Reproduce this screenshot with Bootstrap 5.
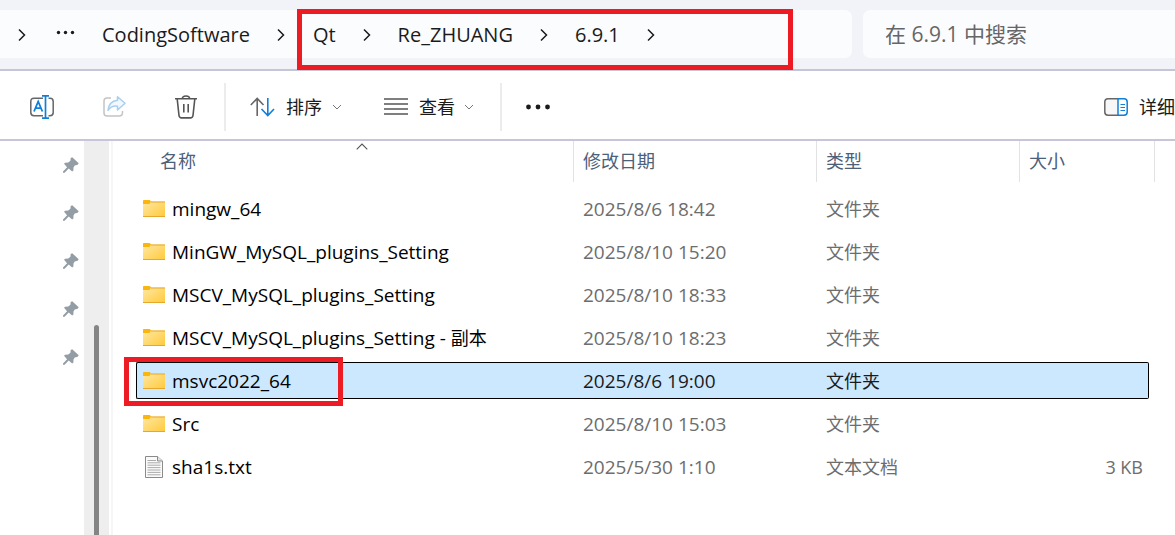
<!DOCTYPE html>
<html lang="zh-CN">
<head>
<meta charset="utf-8">
<meta name="viewport" content="width=device-width, initial-scale=1">
<title>6.9.1</title>
<link href="https://cdn.jsdelivr.net/npm/bootstrap@5.3.0/dist/css/bootstrap.min.css" rel="stylesheet">
<style>
body { font-family: "Open Sans", "Noto Sans CJK SC", sans-serif; font-size: 18px; line-height: 24px; color: #1b1b1b; background: #fff; }
a, button { color: inherit; text-decoration: none; }
svg { display: block; flex: none; }
.topbar { background: #f1f3f9; height: 71px; border-bottom: 2px solid #c5c5da; padding-top: 10px; gap: 11px; font-size: 20px; }
.address { background: #fbfcfe; height: 48px; border-radius: 0 7px 7px 0; padding: 2px 0 0 18px; min-width: 0; }
.trail { gap: 27px; }
.marked { position: relative; height: 36px; margin-left: 1px; gap: 27px; }
.marked::after { content: ""; position: absolute; left: -16px; top: -8px; width: 496px; height: 61px; border: 5px solid #ed1c24; pointer-events: none; }
.search { width: 312px; height: 48px; border: 0; border-radius: 7px 0 0 7px; background: #fbfcfe; padding: 0 22px; font-size: 21px; }
.search::placeholder { color: #666; opacity: 1; }
.toolbar { height: 70px; border-bottom: 2px solid #c8c5d9; padding: 3px 0 0 30px; }
.tool { border: 0; background: none; padding: 0; white-space: nowrap; }
.share, .trash { margin-left: 48px; }
.bar { width: 2px; height: 48px; background: #ececec; margin: 0 24px 0 26px; }
.order { margin-right: 42px; gap: 10px; }
.view { gap: 11px; }
.view svg:last-child { margin-left: -2px; }
.pins { width: 84px; padding-right: 5px; }
.pins button { border: 0; background: none; padding: 0; height: 48px; }
.track { width: 25px; background: #eee; padding: 184px 10px 0; }
.thumb { width: 5px; background: #858585; border-radius: 3px 3px 0 0; }
.split { width: 2px; background: #f6f6f6; margin-left: 2px; }
.pane { padding: 0 20px 0 23px; min-width: 0; }
.files { border-collapse: separate; border-spacing: 0 6px; table-layout: fixed; width: 100%; margin-top: -6px; }
.c-date { width: 243px; }
.c-type { width: 203px; }
.c-size { width: 129px; }
.c-end { width: 6px; }
.files th { height: 43px; padding: 0; font-weight: 400; color: #4c607a; vertical-align: top; }
.files th:first-child { padding-left: 15px; }
.head { height: 41px; padding: 0 0 2px 9px; border-right: 1px solid #e2e2e2; position: relative; display: flex; align-items: center; }
.files td { height: 37px; padding: 0 9px; color: #6d6d6d; white-space: nowrap; vertical-align: middle; }
.files td:first-child { padding-left: 7px; color: #000; }
.files td:nth-child(-n+2) { font-size: 19px; }
.entry { gap: 7px; }
.han { font-size: 18px; }
.files td:nth-child(4) { padding-right: 6px; text-align: right; }
.files td:last-child { padding: 0; }
.sort { position: absolute; left: 50%; top: 2px; transform: translateX(-50%); }
.picked td:not(:last-child) { background: #cce8ff; border: solid #000; border-width: 1px 0; color: #1b1b1b; }
.files .picked td:first-child { border-left-width: 1px; border-radius: 2px 0 0 2px; position: relative; padding-left: 6px; color: #000; }
.picked td:nth-child(4) { border-right-width: 1px !important; border-radius: 0 2px 2px 0; }
.picked td:first-child::after { content: ""; position: absolute; left: -13px; top: -6px; width: 219px; height: 49px; border: 5px solid #ed1c24; }
</style>
</head>
<body class="d-flex flex-column min-vh-100 overflow-hidden">
<svg width="0" height="0" class="position-absolute" aria-hidden="true">
  <defs>
    <linearGradient id="fg" x1="0" y1="0" x2="1" y2="1"><stop offset="0" stop-color="#ffe8a4"/><stop offset="1" stop-color="#ffca3a"/></linearGradient>
    <symbol id="chev" viewBox="0 0 8 14"><path d="M1 1.5 6.5 7 1 12.5" fill="none" stroke="#1b1b1b" stroke-width="1.5"/></symbol>
    <symbol id="down" viewBox="0 0 10 6"><path d="M1 1 5 5 9 1" fill="none" stroke="#777" stroke-width="1"/></symbol>
    <symbol id="folder" viewBox="0 0 22 17"><path d="M0 .8Q0 0 .8 0H6.6L8.3 1.6V4H0Z" fill="#fab50f"/><path d="M8 1.5H21.3Q22 1.5 22 2.2V17H0V4H6.5Z" fill="url(#fg)"/><path d="M0 16.5H22M8 2H22" stroke="#e6a72d" stroke-width="1"/></symbol>
    <symbol id="file" viewBox="0 0 18 22"><path d="M.5.5H12.5L17.5 5V21.5H.5Z" fill="#fafafa" stroke="#8a8a8a"/><path d="M12.5.5V5H17.5" fill="#e6e6e6" stroke="#8a8a8a"/><path d="M2.5 4.5H11M2.5 6.8H15.5M2.5 9.2H15.5M2.5 11.6H15.5M2.5 14H15.5M2.5 16.4H15.5M2.5 18.8H15.5" stroke="#aaa"/></symbol>
    <symbol id="pin" viewBox="0 0 16 16"><path d="M9.2.2 15.7 6.2 14.6 7.8 11.7 8.6 10.4 10.7 10.5 13.2 9.2 14.5 5.7 11.6 1.6 15.7H0V14.5L4.1 10.2 1 6.8 2.2 5.7 5.3 5.5 7.4 3.7 7.7 1Z" fill="#929da5"/></symbol>
  </defs>
</svg>

<header class="topbar d-flex">
  <nav class="address d-flex align-items-center flex-grow-1" aria-label="路径">
    <div class="trail d-flex align-items-center text-nowrap">
      <svg width="8" height="14"><use href="#chev"/></svg>
      <button class="tool" aria-label="更多路径"><svg width="22" height="20" viewBox="0 0 22 20"><g fill="#1b1b1b"><circle cx="5.5" cy="7.5" r="1.7"/><circle cx="12.5" cy="7.5" r="1.7"/><circle cx="19.5" cy="7.5" r="1.7"/></g></svg></button>
      <a href="#">CodingSoftware</a>
      <svg width="8" height="14"><use href="#chev"/></svg>
      <div class="marked d-flex align-items-center">
        <a href="#">Qt</a>
        <svg width="8" height="14"><use href="#chev"/></svg>
        <a href="#">Re_ZHUANG</a>
        <svg width="8" height="14"><use href="#chev"/></svg>
        <a href="#">6.9.1</a>
        <svg width="8" height="14"><use href="#chev"/></svg>
      </div>
    </div>
  </nav>
  <input class="search" type="search" placeholder="在 6.9.1 中搜索" aria-label="搜索">
</header>

<div class="toolbar d-flex align-items-center" role="toolbar">
  <button class="tool" aria-label="重命名"><svg width="24" height="24" viewBox="0 0 24 24" fill="none" stroke-width="1.5"><path d="M13 3.2H4Q.8 3.2 .8 6.4V17.6Q.8 20.8 4 20.8H13M18.5 3.2H20Q23.2 3.2 23.2 6.4V17.6Q23.2 20.8 20 20.8H18.5" stroke="#666"/><path d="M4 16.5 8.2 6.5 12.4 16.5M5.5 13.2H11" stroke="#0f7fd8" stroke-width="1.8"/><path d="M12 .9H19M12 23.1H19M15.5 1V23" stroke="#0f7fd8" stroke-width="1.7"/></svg></button>
  <button class="tool share" aria-label="共享"><svg width="24" height="24" viewBox="0 0 24 24" fill="none" stroke-width="1.5" stroke-linejoin="round"><path d="M9 3H5Q2 3 2 6V18Q2 21 5 21H17Q20.5 21 20.5 17.5V16" stroke="#c4c4c4"/><path d="M15.5 1.8 23 8.3 15.5 15V11.2Q9.5 10.3 6 15.3Q7 6.3 15.5 5.3Z" stroke="#a6cff0" fill="#f2f8fd"/></svg></button>
  <button class="tool trash" aria-label="删除"><svg width="24" height="24" viewBox="0 0 24 24" fill="none" stroke="#555" stroke-width="1.6"><path d="M1 3.8H23M8.3 4Q8.3 1 12 1T15.7 4M3.2 4 5 20.5Q5.3 22.9 7.5 22.9H16.5Q18.7 22.9 19 20.5L20.8 4M9.8 9V17.5M14.2 9V17.5"/></svg></button>
  <div class="bar"></div>
  <button class="tool order d-flex align-items-center">
    <svg width="26" height="20" viewBox="0 0 26 20" fill="none" stroke-width="1.6"><path d="M7.2 19V1.5M.8 8 7.2 1.5 13.5 8" stroke="#666"/><path d="M17.8 1V18.5M11.5 12 17.8 18.5 24 12" stroke="#0f7fd8"/></svg>
    <span>排序</span>
    <svg width="10" height="6"><use href="#down"/></svg>
  </button>
  <button class="tool view d-flex align-items-center">
    <svg width="24" height="17" viewBox="0 0 24 17"><path d="M0 1H24M0 6H24M0 11H24M0 16H24" stroke="#555" stroke-width="1.3"/></svg>
    <span>查看</span>
    <svg width="10" height="6"><use href="#down"/></svg>
  </button>
  <div class="bar"></div>
  <button class="tool" aria-label="更多选项"><svg width="24" height="6" viewBox="0 0 24 6" fill="#1b1b1b"><circle cx="2.5" cy="3" r="2.4"/><circle cx="12" cy="3" r="2.4"/><circle cx="21.5" cy="3" r="2.4"/></svg></button>
  <button class="tool view d-flex align-items-center ms-auto">
    <svg width="24" height="18" viewBox="0 0 24 18" fill="none" stroke-width="1.5"><path d="M14 .8H4Q.8 .8 .8 4V14Q.8 17.2 4 17.2H14" fill="#f7f7f7" stroke="#666"/><path d="M14 .8H20Q23.2 .8 23.2 4V14Q23.2 17.2 20 17.2H14Z" stroke="#0f7fd8"/><path d="M16.5 6.5H21M16.5 9.5H21M16.5 12.5H21" stroke="#0f7fd8" stroke-width="1.2"/></svg>
    <span>详细</span>
  </button>
</div>

<div class="d-flex flex-grow-1">
  <aside class="pins d-flex flex-column align-items-end flex-shrink-0">
    <button aria-label="已固定"><svg width="16" height="16"><use href="#pin"/></svg></button>
    <button aria-label="已固定"><svg width="16" height="16"><use href="#pin"/></svg></button>
    <button aria-label="已固定"><svg width="16" height="16"><use href="#pin"/></svg></button>
    <button aria-label="已固定"><svg width="16" height="16"><use href="#pin"/></svg></button>
    <button aria-label="已固定"><svg width="16" height="16"><use href="#pin"/></svg></button>
  </aside>
  <div class="track d-flex flex-shrink-0"><div class="thumb"></div></div>
  <div class="split flex-shrink-0"></div>
  <main class="pane flex-grow-1">
    <table class="files">
      <colgroup><col><col class="c-date"><col class="c-type"><col class="c-size"><col class="c-end"></colgroup>
      <thead>
        <tr>
          <th scope="col"><div class="head">名称<svg class="sort" width="12" height="7" viewBox="0 0 12 7"><path d="M.7 6.3 6 1 11.3 6.3" fill="none" stroke="#555" stroke-width="1.1"/></svg></div></th>
          <th scope="col"><div class="head">修改日期</div></th>
          <th scope="col"><div class="head">类型</div></th>
          <th scope="col" colspan="2"><div class="head">大小</div></th>
        </tr>
      </thead>
      <tbody>
        <tr><td><div class="entry d-flex align-items-center"><svg width="22" height="17"><use href="#folder"/></svg><span>mingw_64</span></div></td><td>2025/8/6 18:42</td><td>文件夹</td><td></td><td></td></tr>
        <tr><td><div class="entry d-flex align-items-center"><svg width="22" height="17"><use href="#folder"/></svg><span>MinGW_MySQL_plugins_Setting</span></div></td><td>2025/8/10 15:20</td><td>文件夹</td><td></td><td></td></tr>
        <tr><td><div class="entry d-flex align-items-center"><svg width="22" height="17"><use href="#folder"/></svg><span>MSCV_MySQL_plugins_Setting</span></div></td><td>2025/8/10 18:33</td><td>文件夹</td><td></td><td></td></tr>
        <tr><td><div class="entry d-flex align-items-center"><svg width="22" height="17"><use href="#folder"/></svg><span>MSCV_MySQL_plugins_Setting - <span class="han">副本</span></span></div></td><td>2025/8/10 18:23</td><td>文件夹</td><td></td><td></td></tr>
        <tr class="picked"><td><div class="entry d-flex align-items-center"><svg width="22" height="17"><use href="#folder"/></svg><span>msvc2022_64</span></div></td><td>2025/8/6 19:00</td><td>文件夹</td><td></td><td></td></tr>
        <tr><td><div class="entry d-flex align-items-center"><svg width="22" height="17"><use href="#folder"/></svg><span>Src</span></div></td><td>2025/8/10 15:03</td><td>文件夹</td><td></td><td></td></tr>
        <tr><td><div class="entry d-flex align-items-center"><svg width="22" height="22"><use href="#file"/></svg><span>sha1s.txt</span></div></td><td>2025/5/30 1:10</td><td>文本文档</td><td>3 KB</td><td></td></tr>
      </tbody>
    </table>
  </main>
</div>
<script src="https://cdn.jsdelivr.net/npm/bootstrap@5.3.0/dist/js/bootstrap.bundle.min.js"></script>
</body>
</html>
